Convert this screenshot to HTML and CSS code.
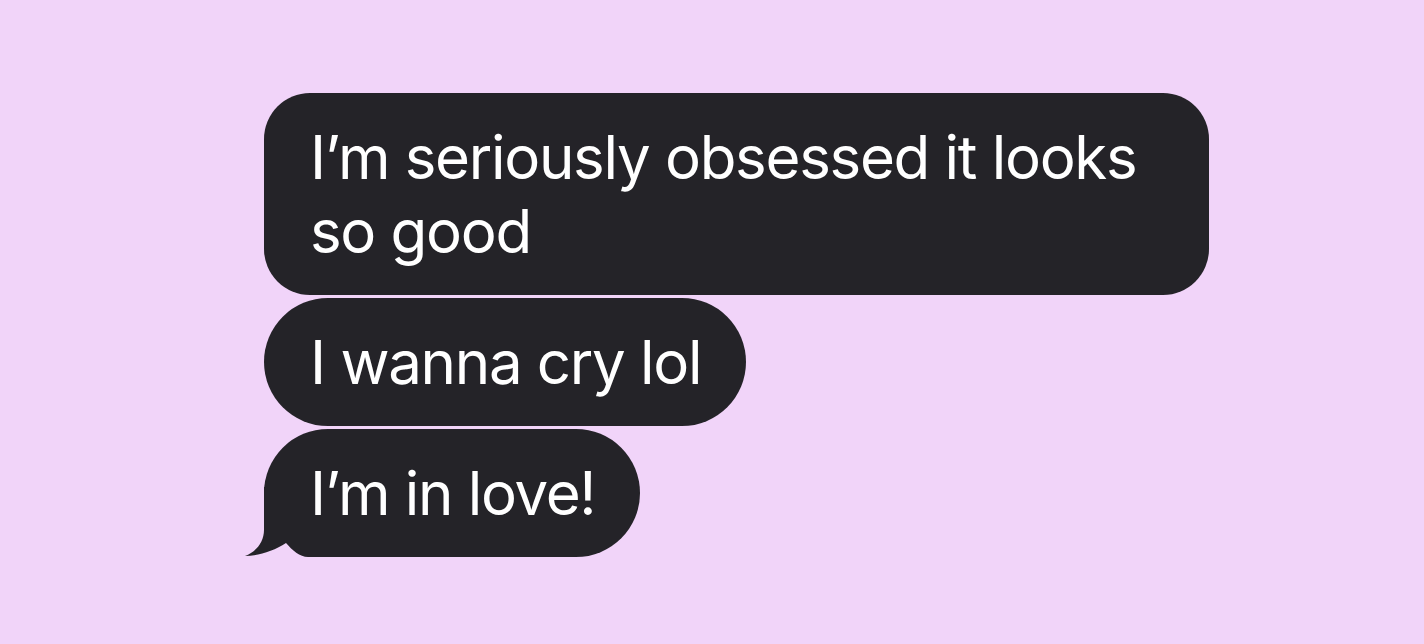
FILE: index.html
```html
<!DOCTYPE html>
<html lang="en">

<head>
    <meta charset="UTF-8">
    <meta name="viewport" content="width=device-width, initial-scale=1.0">
    <title>Messages</title>
    <link rel="stylesheet" href="styles.css">
</head>

<body>
    <div class="thread">
        <div class="bubble bubble-wide">I’m seriously obsessed it looks so good</div>
        <div class="bubble">I wanna cry lol</div>
        <div class="bubble bubble-last">
            I’m in love!
            <!-- tail on the last message -->
            <svg class="tail" width="84" height="70" viewBox="0 0 84 70">
                <path d="M20 0 L20 43 C20 55 12 65 1 69 C14 69 30 64 42 56 C48 63 56 70 64 70 L84 70 L84 0 Z" />
            </svg>
        </div>
    </div>
</body>

</html>
```

FILE: styles.css
```css
body {
    margin: 0;
    padding: 0;
    background-color: #f1d4f9;
    font-family: Inter, "Noto Sans", sans-serif;
    height: 644px;
    overflow: hidden;
}

.thread {
    display: flex;
    flex-direction: column;
    align-items: flex-start;
    gap: 3px;
    padding: 93px 0 0 264px;
}

.bubble {
    position: relative;
    z-index: 0;
    box-sizing: border-box;
    background-color: #242328;
    color: #fff;
    font-size: 60px;
    line-height: 74px;
    letter-spacing: -1.3px;
    padding: 27px 45px 27px 46px;
    border-radius: 64px;
}

.bubble-wide {
    max-width: 945px;
    border-radius: 46px;
}

.tail {
    position: absolute;
    z-index: -1;
    left: -20px;
    bottom: 0;
    fill: #242328;
}
```
